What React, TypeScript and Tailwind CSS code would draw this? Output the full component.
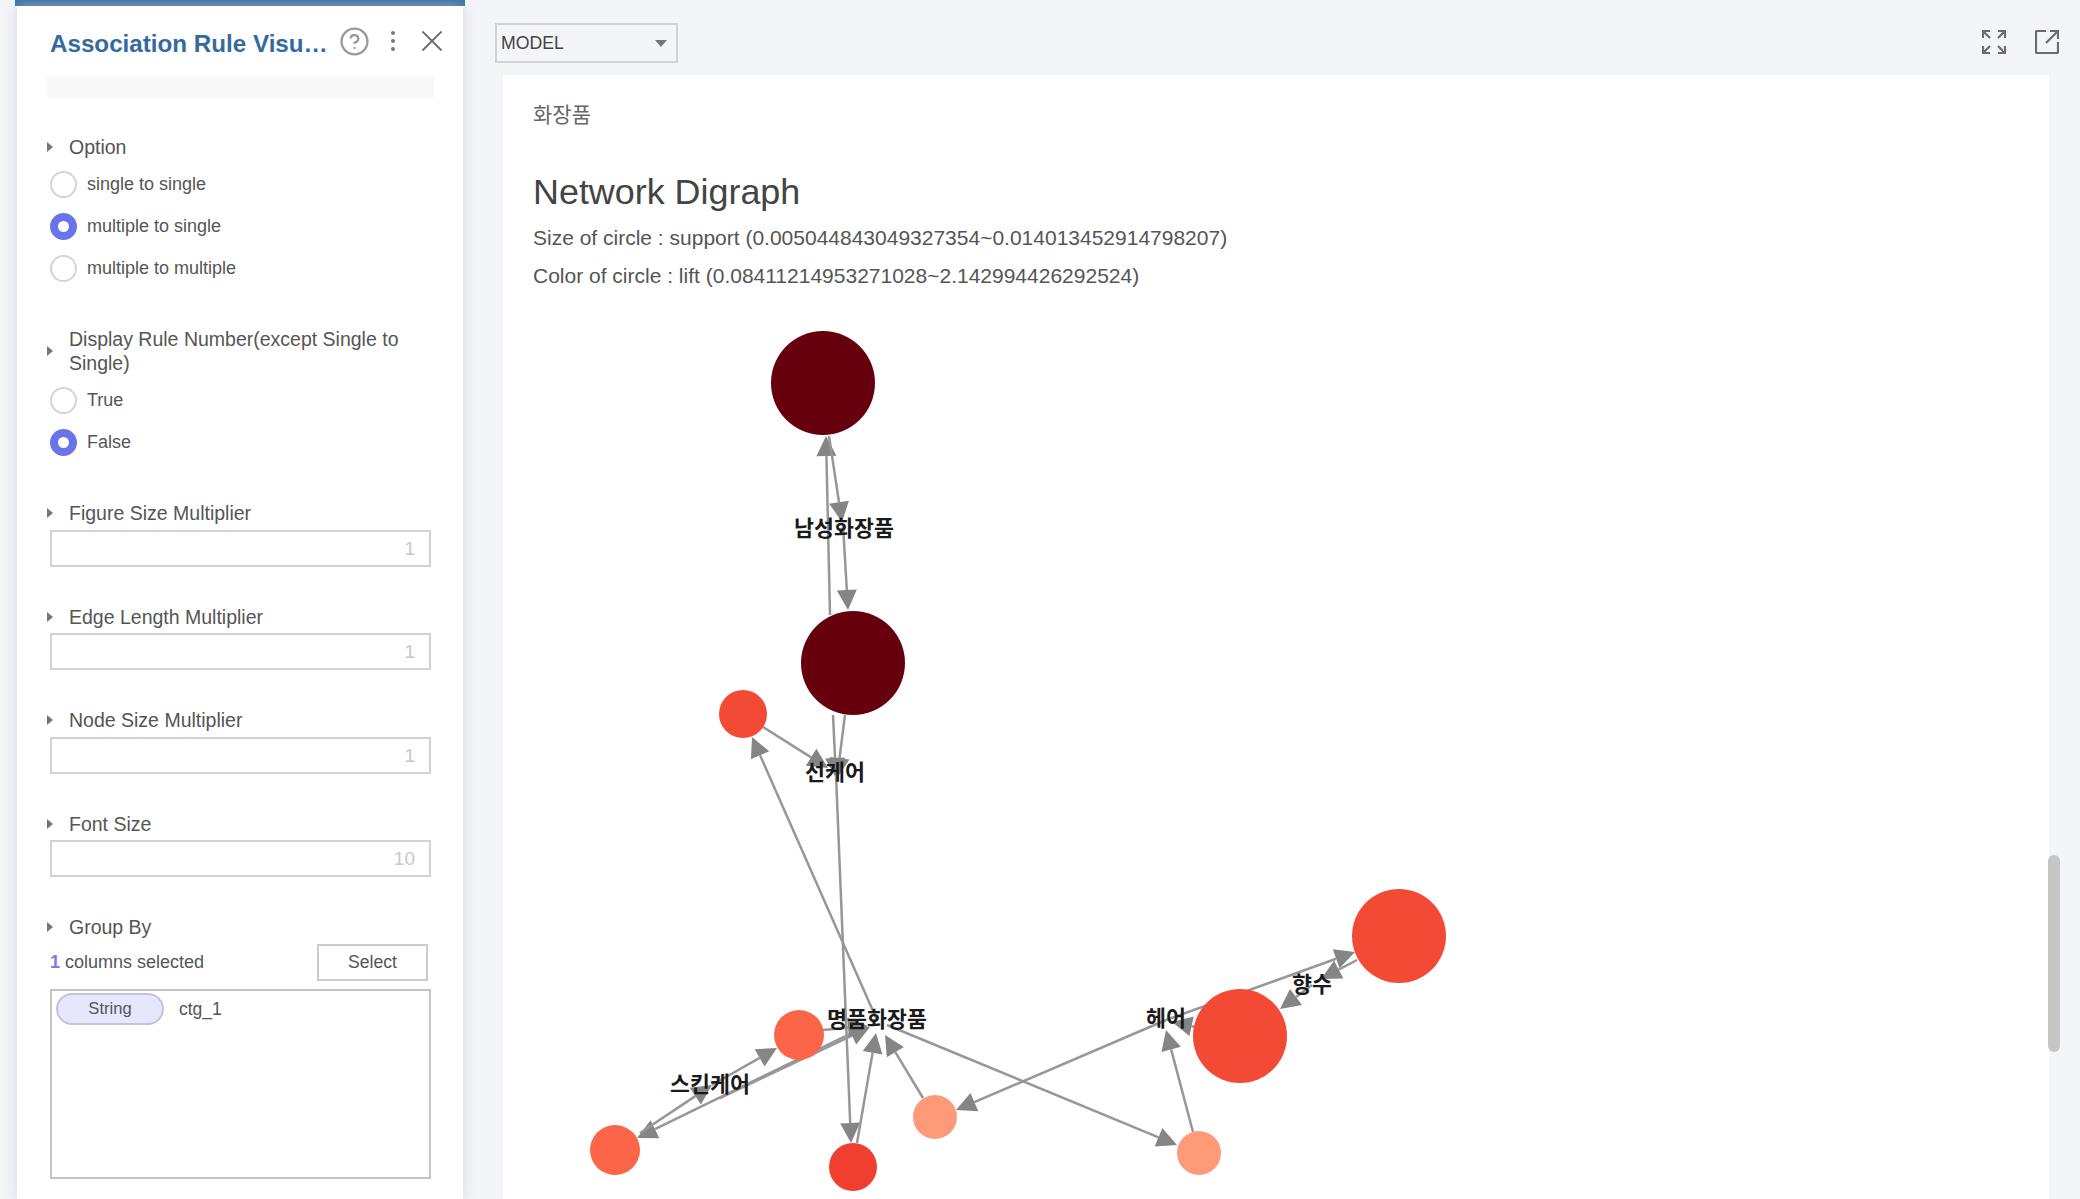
import { CircleHelp } from "lucide-react";

const NODES: [number, number, number, string][] = [
  [823, 383, 52, "#67000d"],
  [853, 663, 52, "#67000d"],
  [743, 714, 24, "#f34a36"],
  [1399, 936, 47, "#f34a36"],
  [1240, 1036, 47, "#f34a36"],
  [1199, 1153, 22, "#fe9a78"],
  [799, 1035, 25, "#fc6547"],
  [615, 1150, 25, "#fc6547"],
  [853, 1167, 24, "#f03f2f"],
  [935, 1117, 22, "#fe9a78"],
];

const EDGES: [number, number, number, number][] = [
  [830, 615, 826, 436],
  [829, 436, 842, 522],
  [843, 525, 848, 610],
  [833, 715, 836, 778],
  [845, 715, 837, 778],
  [763, 727, 828, 768],
  [836, 775, 851, 1143],
  [877, 1020, 752, 737],
  [862, 1028, 637, 1138],
  [720, 1098, 870, 1027],
  [640, 1133, 712, 1085],
  [712, 1085, 777, 1048],
  [823, 1030, 868, 1026],
  [857, 1143, 876, 1033],
  [923, 1098, 885, 1035],
  [887, 1025, 1177, 1145],
  [1166, 1020, 956, 1110],
  [1193, 1132, 1166, 1030],
  [1195, 1027, 1172, 1022],
  [1166, 1020, 1355, 952],
  [1357, 960, 1321, 979],
  [1312, 985, 1280, 1009],
];

const LABELS: [string, number, number][] = [
  ["남성화장품", 844, 526],
  ["선케어", 835, 770],
  ["명품화장품", 877, 1017],
  ["스킨케어", 710, 1082],
  ["헤어", 1166, 1016],
  ["향수", 1312, 982],
];

function Arrow({ edge }: { edge: [number, number, number, number] }) {
  const [x1, y1, x2, y2] = edge;
  const len = Math.hypot(x2 - x1, y2 - y1);
  const ux = (x2 - x1) / len;
  const uy = (y2 - y1) / len;
  const bx = x2 - ux * 20;
  const by = y2 - uy * 20;
  const points = `${x2},${y2} ${bx - uy * 10},${by + ux * 10} ${bx + uy * 10},${by - ux * 10}`;
  return (
    <g>
      <line x1={x1} y1={y1} x2={bx} y2={by} stroke="#979797" strokeWidth={2.5} />
      <polygon points={points} fill="#858585" />
    </g>
  );
}

function Graph() {
  return (
    <svg className="block" width={920} height={909} viewBox="533 290 920 909">
      {EDGES.map((edge, i) => (
        <Arrow key={i} edge={edge} />
      ))}
      {NODES.map(([cx, cy, r, fill], i) => (
        <circle key={i} cx={cx} cy={cy} r={r} fill={fill} />
      ))}
      {LABELS.map(([text, x, y]) => (
        <text
          key={text}
          x={x}
          y={y}
          textAnchor="middle"
          dominantBaseline="central"
          fontSize={21.7}
          fontWeight={700}
          fill="#1a1a1a"
          fontFamily="'Noto Sans CJK KR', sans-serif"
        >
          {text}
        </text>
      ))}
    </svg>
  );
}

function Caret() {
  return <span className="h-0 w-0 shrink-0 border-y-[5.5px] border-l-[6px] border-y-transparent border-l-[#777]" />;
}

function SectionLabel({ text, className }: { text: string; className: string }) {
  return (
    <div className={`flex items-center gap-4 text-[19.5px] leading-6 text-[#555] ${className}`}>
      <Caret />
      <span>{text}</span>
    </div>
  );
}

function Radio({ label, checked }: { label: string; checked?: boolean }) {
  return (
    <label className="ml-[3px] flex h-[42px] items-center gap-2.5 text-[18px] text-[#555]">
      {checked ? (
        <span className="size-[27px] rounded-full border-[8px] border-[#6b73e8] bg-white" />
      ) : (
        <span className="size-[27px] rounded-full border-2 border-[#d4d4d4] bg-white" />
      )}
      {label}
    </label>
  );
}

function NumberField({ value, className }: { value: string; className: string }) {
  return (
    <input
      readOnly
      value={value}
      className={`ml-[3px] block h-[37px] w-[381px] border-2 border-[#d2d2d2] bg-white pr-3.5 text-right text-[19px] text-[#c8c8c8] outline-none ${className}`}
    />
  );
}

function Sidebar() {
  return (
    <aside className="relative h-full w-[450px] shrink-0">
      <div className="h-1.5 w-full bg-[#3a6e9e]" />
      <div className="mx-0.5 h-[1193px] bg-white px-[30px] shadow-[0_0_12px_rgba(190,200,220,0.7)]">
        <div className="flex h-[69px] items-center pt-px">
          <h1 className="ml-[3px] mt-1.5 w-[282px] shrink-0 whitespace-nowrap text-[24.2px] font-bold text-[#346b9e]">
            Association Rule Visu…
          </h1>
          <CircleHelp size={31} strokeWidth={1.8} className="ml-[7px] shrink-0 text-[#9a9a9a]" />
          <svg width={6} height={24} viewBox="0 0 6 24" className="ml-5 shrink-0">
            <circle cx={3} cy={4} r={2} fill="#777" />
            <circle cx={3} cy={12} r={2} fill="#777" />
            <circle cx={3} cy={20} r={2} fill="#777" />
          </svg>
          <svg width={22} height={22} viewBox="0 0 22 22" className="ml-[25px] shrink-0">
            <path d="M1.5 1.5L20.5 20.5M20.5 1.5L1.5 20.5" stroke="#6e6e6e" strokeWidth={1.8} fill="none" />
          </svg>
        </div>
        <div className="h-[23px] w-[387px] bg-[#f8f8f8]" />

        <SectionLabel text="Option" className="mt-[37px]" />
        <div className="mt-1">
          <Radio label="single to single" />
          <Radio label="multiple to single" checked />
          <Radio label="multiple to multiple" />
        </div>

        <SectionLabel text="Display Rule Number(except Single to Single)" className="mt-[38px]" />
        <div className="mt-1">
          <Radio label="True" />
          <Radio label="False" checked />
        </div>

        <SectionLabel text="Figure Size Multiplier" className="mt-[38px]" />
        <NumberField value="1" className="mt-[5px]" />
        <SectionLabel text="Edge Length Multiplier" className="mt-[38px]" />
        <NumberField value="1" className="mt-1" />
        <SectionLabel text="Node Size Multiplier" className="mt-[38px]" />
        <NumberField value="1" className="mt-[5px]" />
        <SectionLabel text="Font Size" className="mt-[38px]" />
        <NumberField value="10" className="mt-1" />
        <SectionLabel text="Group By" className="mt-[38px]" />

        <div className="ml-[3px] mt-[5px] flex w-[378px] items-center justify-between">
          <span className="text-[18px] text-[#555]">
            <b className="text-[#7b7be8]">1</b> columns selected
          </span>
          <button
            type="button"
            className="h-[37px] w-[111px] border-2 border-[#cccccc] bg-white text-[17.6px] text-[#555]"
          >
            Select
          </button>
        </div>
        <div className="ml-[3px] mt-2 h-[190px] w-[381px] border-2 border-[#c4c4c4] px-1 pt-0.5">
          <div className="flex items-center gap-[15px] text-[17.5px] text-[#555]">
            <span className="flex h-8 w-[108px] items-center justify-center rounded-full border-2 border-[#c1c3dc] bg-[#e5e7fd] text-[16.6px]">
              String
            </span>
            ctg_1
          </div>
        </div>
      </div>
    </aside>
  );
}

function Toolbar() {
  return (
    <div className="flex h-[75px] items-start justify-between pl-[30px] pt-[23px]">
      <div className="flex h-[40px] w-[183px] items-center justify-between border-2 border-[#d2d2d2] pl-1 pr-[9px] text-[17.7px] text-[#444]">
        MODEL
        <span className="h-0 w-0 border-x-[6px] border-t-[7px] border-x-transparent border-t-[#777]" />
      </div>
      <div className="mr-[21px] mt-[7px] flex items-center gap-[29px]">
        <svg width={24} height={24} viewBox="0 0 24 24" fill="none" stroke="#666c78" strokeWidth={2.2}>
          <path d="M1 8V1h7M1 1l7 7M16 1h7v7M23 1l-7 7M1 16v7h7M1 23l7-7M23 16v7h-7M23 23l-7-7" />
        </svg>
        <svg width={24} height={24} viewBox="0 0 24 24" fill="none" stroke="#666c78" strokeWidth={2.2}>
          <path d="M11 1H2a1 1 0 0 0-1 1v20a1 1 0 0 0 1 1h20a1 1 0 0 0 1-1V12M15 1h8v8M23 1L11 13" />
        </svg>
      </div>
    </div>
  );
}

export default function App() {
  return (
    <div className="flex h-[1199px] w-[2080px] overflow-hidden bg-[#f4f5f8] pl-[15px] font-['Liberation_Sans','Noto_Sans_CJK_KR',sans-serif]">
      <Sidebar />
      <main className="relative flex-1">
        <Toolbar />
        <section className="ml-[38px] h-[1124px] w-[1546px] overflow-hidden bg-white pl-[30px] pt-[28px] text-[#555]">
          <p className="text-[21px] leading-6 text-[#666]">화장품</p>
          <h2 className="mt-[43px] text-[35.9px] leading-[44px] text-[#444]">Network Digraph</h2>
          <p className="mt-2.5 text-[21px] leading-7">
            Size of circle : support (0.005044843049327354~0.014013452914798207)
          </p>
          <p className="mt-2.5 text-[21px] leading-7">
            Color of circle : lift (0.08411214953271028~2.142994426292524)
          </p>
          <Graph />
        </section>
        <div className="absolute left-[1583px] top-[855px] h-[197px] w-3 rounded-full bg-[#c6c6c6]" />
      </main>
    </div>
  );
}
